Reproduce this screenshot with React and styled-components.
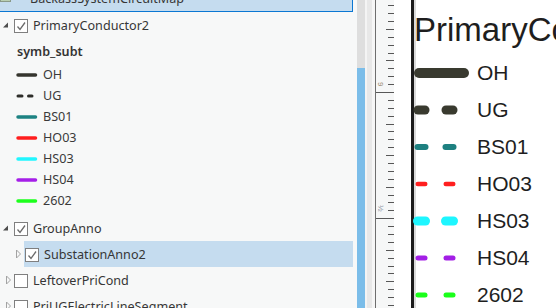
import React from "react";
import styled, { createGlobalStyle } from "styled-components";

const GlobalStyle = createGlobalStyle`
  html, body {
    margin: 0;
    padding: 0;
    background: #ffffff;
  }
`;

const tocSymbols = [
  { label: "OH", color: "#35352e", dashed: false, width: 3.5 },
  { label: "UG", color: "#2e2e2a", dashed: true, width: 3 },
  { label: "BS01", color: "#1d8282", dashed: false, width: 3.5 },
  { label: "HO03", color: "#ff1e1e", dashed: false, width: 3.5 },
  { label: "HS03", color: "#22f6ff", dashed: false, width: 3.5 },
  { label: "HS04", color: "#a51fe8", dashed: false, width: 3.5 },
  { label: "2602", color: "#1dff1d", dashed: false, width: 3.5 },
];

const layoutSymbols = [
  { label: "OH", color: "#393a2f", width: 10, solid: true },
  { label: "UG", color: "#393a2f", width: 9, len: 16 },
  { label: "BS01", color: "#1d8080", width: 6, len: 14 },
  { label: "HO03", color: "#ff1f1f", width: 4.5, len: 12 },
  { label: "HS03", color: "#1ef6ff", width: 9, len: 17 },
  { label: "HS04", color: "#a31fe6", width: 5, len: 12 },
  { label: "2602", color: "#1aff1a", width: 5, len: 12 },
];

const Expander = ({ open }) => (
  <ExpanderBox>
    <svg width="12" height="12" viewBox="0 0 12 12">
      {open ? (
        <polygon points="6,3.5 6,8.5 1,8.5" fill="#4d4d4d" />
      ) : (
        <polygon
          points="4.5,2 8.5,6 4.5,10"
          fill="none"
          stroke="#a3a3a3"
          strokeWidth="1"
        />
      )}
    </svg>
  </ExpanderBox>
);

const Check = ({ checked }) => (
  <CheckBox>
    {checked && (
      <svg width="12" height="12" viewBox="0 0 12 12">
        <polyline
          points="2.5,6.5 5,9.5 10,2.5"
          fill="none"
          stroke="#6b6b6b"
          strokeWidth="1.3"
        />
      </svg>
    )}
  </CheckBox>
);

const Layer = ({ level = 1, open, checked, selected, children }) => (
  <LayerRow $indent={level === 1 ? 2 : 12}>
    {open === undefined ? <ExpanderBox /> : <Expander open={open} />}
    <LayerBody $selected={selected} $pad={level === 1 ? 0 : 1}>
      <Check checked={checked} />
      <LayerName>{children}</LayerName>
    </LayerBody>
  </LayerRow>
);

const TocSwatch = ({ color, dashed, width }) => (
  <svg width="22" height="8" viewBox="0 0 22 8">
    {dashed ? (
      <>
        <line x1="2" y1="4" x2="6" y2="4" stroke={color} strokeWidth={width} strokeLinecap="round" />
        <line x1="12.5" y1="4" x2="16" y2="4" stroke={color} strokeWidth={width} strokeLinecap="round" />
      </>
    ) : (
      <line x1="2" y1="4" x2="19.5" y2="4" stroke={color} strokeWidth={width} strokeLinecap="round" />
    )}
  </svg>
);

const LayoutSwatch = ({ color, width, len, solid }) => {
  if (solid) {
    return (
      <svg width="60" height="14" viewBox="0 0 60 14">
        <line x1="6" y1="7" x2="51" y2="7" stroke={color} strokeWidth={width} strokeLinecap="round" />
      </svg>
    );
  }
  const half = (len - width) / 2;
  return (
    <svg width="60" height="14" viewBox="0 0 60 14">
      {[8.5, 36.5].map((cx) => (
        <line
          key={cx}
          x1={cx - half}
          y1="7"
          x2={cx + half}
          y2="7"
          stroke={color}
          strokeWidth={width}
          strokeLinecap="round"
        />
      ))}
    </svg>
  );
};

const RulerDrawing = () => {
  const ticks = [];
  for (let k = -12; k <= 28; k++) {
    const y = Math.round(92 + 7.89 * k) + 0.5;
    let len = 6;
    if (k % 16 === 0) len = 18;
    else if (k % 4 === 0) len = 8;
    ticks.push(
      <line key={k} x1={19 - len} y1={y} x2="19" y2={y} stroke="#575757" strokeWidth="1" />
    );
  }
  return (
    <svg width="19" height="308" viewBox="0 0 19 308">
      <line x1="0.5" y1="0" x2="0.5" y2="308" stroke="#6e6e6e" strokeWidth="1" />
      {ticks}
      <text x="0" y="0" transform="translate(2.5,82) rotate(90)" fontSize="8" fill="#9a8a73" fontFamily="Liberation Sans, sans-serif">
        9
      </text>
      <text x="0" y="0" transform="translate(2.5,205) rotate(90)" fontSize="8" fill="#8c93a3" fontFamily="Liberation Sans, sans-serif">
        ½
      </text>
    </svg>
  );
};

export default function App() {
  return (
    <>
      <GlobalStyle />
      <Screen>
        <TocPane>
          <TopRow>
            <MapIcon>
              <svg width="11" height="10" viewBox="0 0 11 10">
                <rect x="0.5" y="0.5" width="10" height="9" fill="#b9cfb2" stroke="#8a9a88" />
                <path d="M1 6 L4 3 L7 6 L10 4" fill="none" stroke="#6f8f6f" />
              </svg>
            </MapIcon>
            <LayerName>BackassSystemCircuitMap</LayerName>
          </TopRow>

          <Layer open checked>
            PrimaryConductor2
          </Layer>
          <FieldHeading>symb_subt</FieldHeading>
          {tocSymbols.map((s) => (
            <SymbolRow key={s.label}>
              <TocSwatch color={s.color} dashed={s.dashed} width={s.width} />
              <SymbolLabel>{s.label}</SymbolLabel>
            </SymbolRow>
          ))}

          <GroupGap />
          <Layer open checked>
            GroupAnno
          </Layer>
          <Layer level={2} open={false} checked selected>
            SubstationAnno2
          </Layer>
          <Layer open={false}>LeftoverPriCond</Layer>
          <Layer open={false}>PriUGElectricLineSegment</Layer>
        </TocPane>

        <Scrollbar>
          <ScrollThumb />
        </Scrollbar>
        <Gutter />
        <Ruler>
          <RulerDrawing />
        </Ruler>

        <Page>
          <LegendFrame>
            <LegendTitle>PrimaryConductor2</LegendTitle>
            {layoutSymbols.map((s) => (
              <LegendRow key={s.label}>
                <LayoutSwatch {...s} />
                <LegendLabel>{s.label}</LegendLabel>
              </LegendRow>
            ))}
          </LegendFrame>
        </Page>
      </Screen>
    </>
  );
}

const Screen = styled.div`
  display: flex;
  width: 556px;
  height: 308px;
  overflow: hidden;
  background: #f7f8f8;
  font-family: "Noto Sans", "Open Sans", sans-serif;
`;

const TocPane = styled.div`
  width: 357px;
  flex-shrink: 0;
  display: flex;
  flex-direction: column;
  overflow: hidden;
  background: #f7f8f8;
`;

const TopRow = styled.div`
  display: flex;
  align-items: center;
  height: 25px;
  width: 352px;
  margin-top: -15px;
  flex-shrink: 0;
  background: #c5dcef;
  border: 1px solid #0b77d3;
  border-left: none;
`;

const MapIcon = styled.div`
  width: 25px;
  display: flex;
  align-items: flex-end;
  align-self: flex-end;
  margin-bottom: 9px;
  svg {
    display: block;
  }
`;

const LayerRow = styled.div`
  display: flex;
  align-items: center;
  height: 26px;
  flex-shrink: 0;
  padding-left: ${(p) => p.$indent}px;
`;

const ExpanderBox = styled.div`
  width: 12px;
  height: 12px;
  flex-shrink: 0;
  svg {
    display: block;
  }
`;

const LayerBody = styled.div`
  display: flex;
  align-items: center;
  align-self: stretch;
  flex: 1;
  margin-right: 4px;
  padding-left: ${(p) => p.$pad}px;
  background: ${(p) => (p.$selected ? "#c5dcef" : "transparent")};
`;

const CheckBox = styled.div`
  width: 12px;
  height: 12px;
  flex-shrink: 0;
  border: 1px solid #7f7f7f;
  background: #ffffff;
  margin-top: 1px;
  svg {
    display: block;
  }
`;

const LayerName = styled.span`
  margin-left: 5px;
  font-size: 12.6px;
  color: #363636;
  white-space: nowrap;
`;

const FieldHeading = styled.div`
  height: 26px;
  flex-shrink: 0;
  display: flex;
  align-items: center;
  padding-left: 17px;
  font-size: 12.6px;
  font-weight: 600;
  color: #333333;
`;

const SymbolRow = styled.div`
  display: flex;
  align-items: center;
  height: 21px;
  flex-shrink: 0;
  padding-left: 16px;
  svg {
    display: block;
  }
`;

const SymbolLabel = styled.span`
  margin-left: 5px;
  font-size: 12.6px;
  color: #3a3a3a;
`;

const GroupGap = styled.div`
  height: 4px;
  flex-shrink: 0;
`;

const Scrollbar = styled.div`
  width: 8px;
  flex-shrink: 0;
  display: flex;
  flex-direction: column;
  background: #dedede;
`;

const ScrollThumb = styled.div`
  margin-top: 68px;
  flex: 1;
  background: #7bbde9;
`;

const Gutter = styled.div`
  width: 10px;
  flex-shrink: 0;
  background: linear-gradient(
    to right,
    #f4f4f4 0 2px,
    #e8e8e8 2px 7px,
    #f6f6f6 7px
  );
`;

const Ruler = styled.div`
  width: 19px;
  flex-shrink: 0;
  background: #f6f7f7;
  svg {
    display: block;
  }
`;

const Page = styled.div`
  flex: 1;
  display: flex;
  background: #ffffff;
  padding-left: 17px;
  overflow: hidden;
`;

const LegendFrame = styled.div`
  flex: 1;
  display: flex;
  flex-direction: column;
  border-left: 3px solid #1b1b1b;
  background: linear-gradient(to right, #dadada 0 2px, #ffffff 2px);
  font-family: "Liberation Sans", Arial, sans-serif;
  color: #1e1e1e;
`;

const LegendTitle = styled.div`
  margin-top: 11px;
  height: 38px;
  line-height: 38px;
  font-size: 33px;
  white-space: nowrap;
  margin-bottom: 5px;
`;

const LegendRow = styled.div`
  display: flex;
  align-items: center;
  height: 37px;
  flex-shrink: 0;
  margin-left: -1px;
  svg {
    display: block;
    flex-shrink: 0;
  }
`;

const LegendLabel = styled.span`
  margin-left: 4px;
  font-size: 21px;
`;
